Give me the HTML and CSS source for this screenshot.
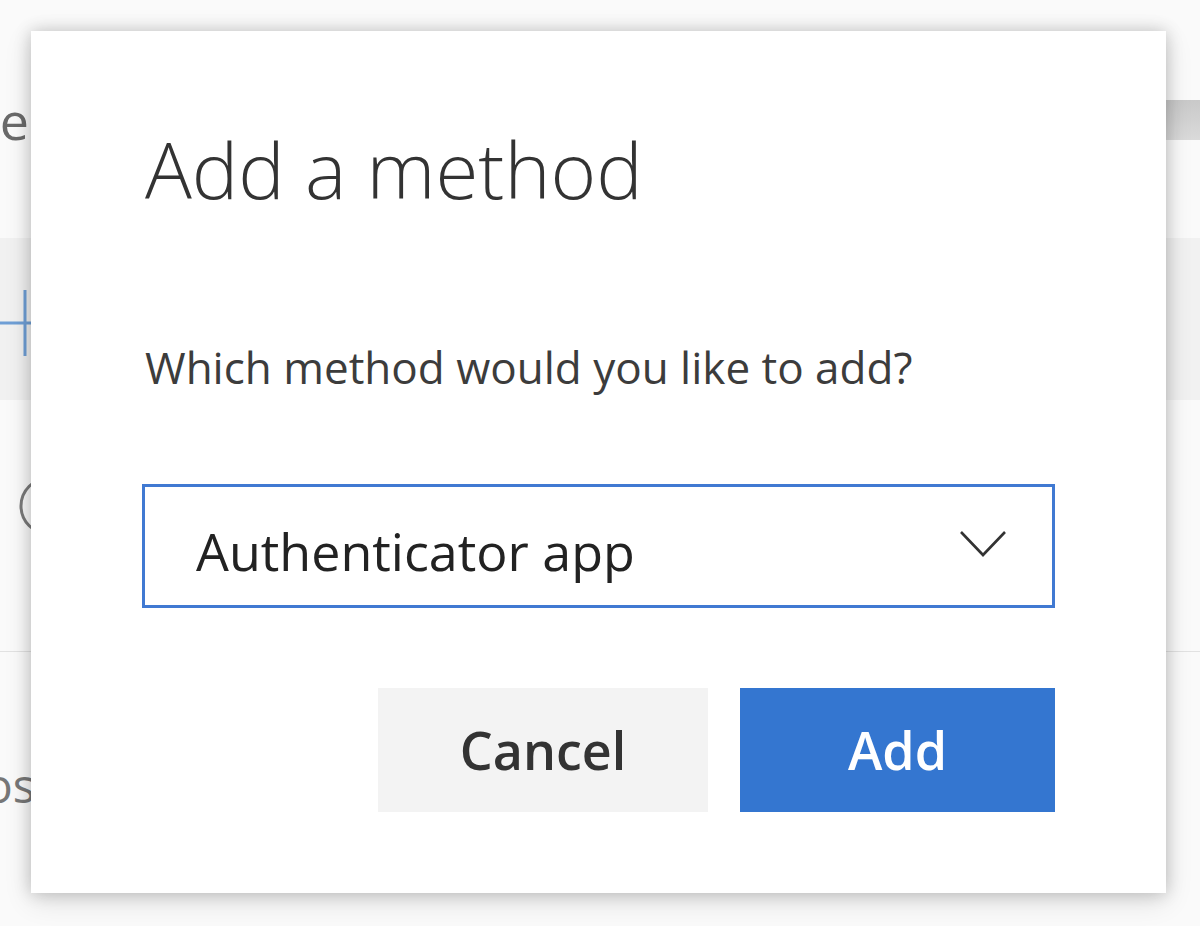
FILE: index.html
```html
<!DOCTYPE html>
<html lang="en">
<head>
<meta charset="utf-8">
<title>Add a method</title>
<link rel="stylesheet" href="styles.css">
</head>
<body>
<div class="page">
  <div class="page-head">
    <div class="clip-left"><span class="head-text">Change</span></div>
    <div class="head-pill"></div>
  </div>
  <div class="page-band">
    <svg class="plus" width="66" height="66" viewBox="0 0 66 66"><path d="M33 0V66M0 33H66" stroke="#6f9fd6" stroke-width="3" fill="none"/></svg>
  </div>
  <div class="page-row">
    <svg class="row-icon" width="64" height="64" viewBox="0 0 64 64"><circle cx="32" cy="32" r="28" stroke="#7a7a7a" stroke-width="3" fill="none"/></svg>
  </div>
  <div class="page-foot">
    <span class="foot-text">Lost device?</span>
  </div>
</div>

<div class="dialog" role="dialog" aria-labelledby="dlg-title">
  <h1 class="dialog-title" id="dlg-title">Add a method</h1>
  <p class="dialog-question">Which method would you like to add?</p>
  <div class="select">
    <span class="select-value">Authenticator app</span>
    <svg class="chevron" width="48" height="30" viewBox="0 0 48 30"><polyline points="2,3 24,26 46,3" stroke="#333" stroke-width="2.6" fill="none"/></svg>
  </div>
  <div class="dialog-actions">
    <button class="btn btn-secondary" type="button">Cancel</button>
    <button class="btn btn-primary" type="button">Add</button>
  </div>
</div>
</body>
</html>
```

FILE: styles.css
```css
html, body {
  margin: 0;
  padding: 0;
}
body {
  width: 1200px;
  height: 926px;
  overflow: hidden;
  background: #fafafa;
  font-family: "Open Sans", "Noto Sans", "Liberation Sans", sans-serif;
  color: #333;
}

/* background page (mostly hidden by the dialog) */
.page {
  display: flex;
  flex-direction: column;
}
.page-head {
  height: 238px;
  display: flex;
  align-items: flex-start;
}
.clip-left {
  width: 29px;
  display: flex;
  justify-content: flex-end;
  padding-top: 94px;
}
.head-text {
  font-size: 52px;
  line-height: 1;
  color: #6a6a6a;
  white-space: nowrap;
}
.head-pill {
  margin-left: auto;
  margin-top: 100px;
  margin-right: -20px;
  width: 80px;
  height: 40px;
  border-radius: 4px;
  background: linear-gradient(#c9c9c9, #dadada);
}
.page-band {
  height: 162px;
  background: #f1f1f1;
  display: flex;
  align-items: flex-start;
}
.plus {
  margin-left: -8px;
  margin-top: 52px;
}
.page-row {
  height: 251px;
  border-bottom: 1px solid #e2e2e2;
  display: flex;
  align-items: flex-start;
}
.row-icon {
  margin-left: 17px;
  margin-top: 74px;
}
.page-foot {
  padding-top: 110px;
}
.foot-text {
  display: block;
  margin-left: -40px;
  font-size: 47px;
  line-height: 1;
  color: #777;
  white-space: nowrap;
}

/* dialog */
.dialog {
  position: absolute;
  left: 31px;
  top: 31px;
  width: 1135px;
  height: 862px;
  box-sizing: border-box;
  padding: 0 111px;
  background: #fff;
  box-shadow: 0 0 16px rgba(0, 0, 0, 0.2), 0 8px 26px rgba(0, 0, 0, 0.12);
  display: flex;
  flex-direction: column;
}
.dialog-title {
  margin: 99px 0 0 3px;
  font-size: 78px;
  line-height: 1;
  font-weight: 300;
  color: #333;
}
.dialog-question {
  margin: 137px 0 0 3px;
  font-size: 44px;
  line-height: 1;
  font-weight: 400;
  color: #3c3c3c;
}
.select {
  margin-top: 95px;
  height: 124px;
  box-sizing: border-box;
  border: 3px solid #4079d2;
  display: flex;
  align-items: center;
  padding: 0 45px 0 51px;
}
.select-value {
  font-size: 52px;
  line-height: 1;
  color: #222;
  flex: 1;
  margin-top: 10px;
}
.chevron {
  display: block;
  margin-top: -4px;
}
.dialog-actions {
  margin-top: 80px;
  display: flex;
  justify-content: flex-end;
  gap: 32px;
}
.btn {
  height: 124px;
  border: none;
  padding: 0;
  font-family: inherit;
  font-size: 52px;
  font-weight: 600;
  line-height: 1;
}
.btn-secondary {
  width: 330px;
  background: #f3f3f3;
  color: #333;
}
.btn-primary {
  width: 315px;
  background: #3476d0;
  color: #fff;
}
```
